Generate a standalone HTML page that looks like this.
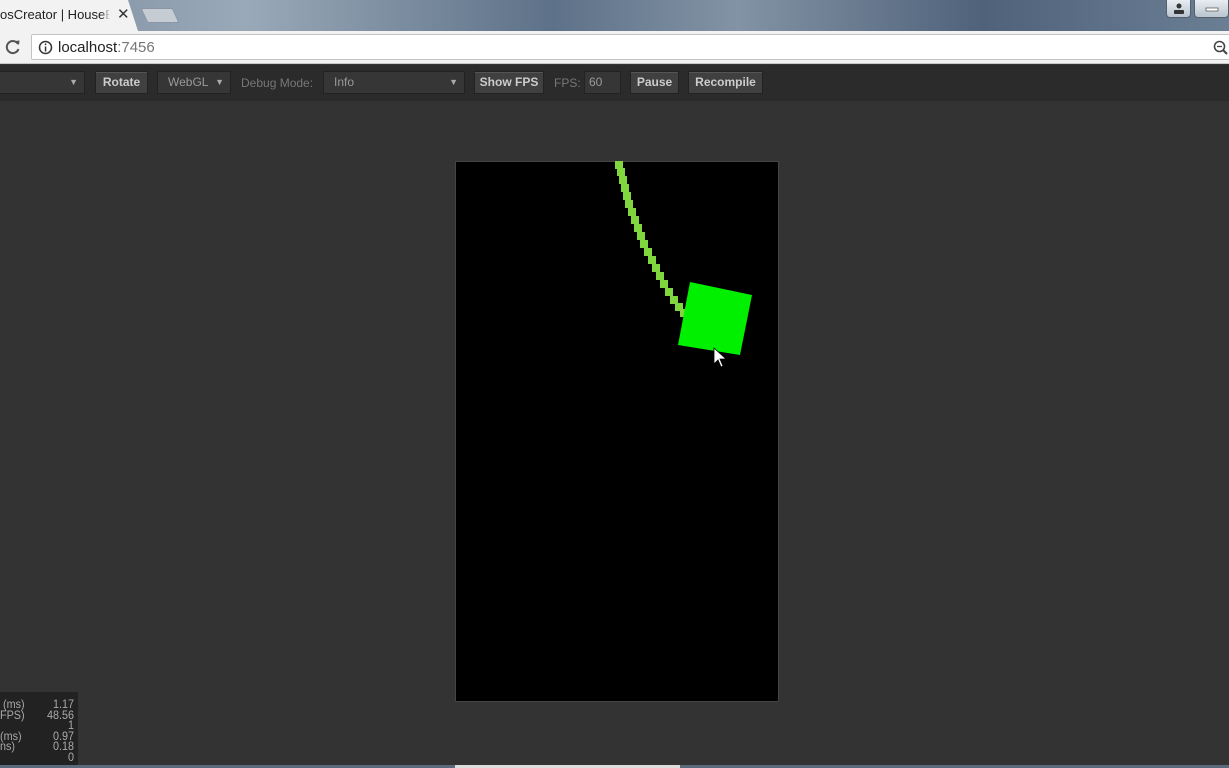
<!DOCTYPE html>
<html><head><meta charset="utf-8"><style>
*{margin:0;padding:0;box-sizing:border-box}
body{width:1229px;height:768px;overflow:hidden;background:#333;font-family:"Liberation Sans",sans-serif;position:relative}
.tabbar{position:absolute;left:0;top:0;width:1229px;height:31px;background:linear-gradient(90deg,#7c8da0,#9aa9b8 20%,#5d7188 45%,#8393a5 60%,#4f627a 80%,#6a7e94);}
.tab{position:absolute;left:0;top:0;width:138px;height:31px;background:#f2f2f2;clip-path:polygon(0 0,128px 0,138px 31px,0 31px)}
.tab span{position:absolute;left:0;top:7px;width:110px;overflow:hidden;font-size:13px;color:#222;white-space:nowrap;-webkit-mask-image:linear-gradient(90deg,#000 92%,transparent)}
.tab b{position:absolute;left:117px;top:5px;font-size:15px;font-weight:normal;color:#333}
.newtab{position:absolute;left:144px;top:8px;width:32px;height:15px;background:#c6ccd3;transform:skewX(25deg);border:1px solid #8a96a3;border-radius:2px}
.wb{position:absolute;top:0;height:18px;background:linear-gradient(#e8edf2,#b9c4cf);border:1px solid #55606c;border-top:none;border-radius:0 0 4px 4px}
.addr{position:absolute;left:0;top:31px;width:1229px;height:33px;background:#f2f2f2;border-bottom:1px solid #c8c8c8}
.input{position:absolute;left:31px;top:3px;width:1210px;height:26px;background:#fff;border:1px solid #c3c3c3;border-radius:2px}
.input span{position:absolute;left:26px;top:4px;font-size:15px;color:#222}
.toolbar{position:absolute;left:0;top:65px;width:1229px;height:36px;background:#2b2b2b}
.btn{position:absolute;top:6px;height:23px;background:#404040;border:1px solid #222;box-shadow:inset 0 1px 0 #555;color:#ccc;font-size:12px;font-weight:bold;line-height:21px;text-align:center}
.sel{position:absolute;top:6px;height:23px;background:#363636;border:1px solid #222;color:#999;font-size:12px;line-height:21px;padding-left:10px}
.sel i{position:absolute;right:6px;top:0;font-style:normal;font-size:9px;color:#aaa}
.lbl{position:absolute;top:11px;font-size:12px;color:#777}
.canvas{position:absolute;left:455px;top:161px;width:324px;height:541px;background:#000;border:1px solid #444}
.stats{position:absolute;left:0;top:692px;width:78px;height:74px;background:#222;font-family:"Liberation Sans Narrow","Liberation Sans",sans-serif;font-size:12px;line-height:10.6px;color:#aaa}
.stats .l{position:absolute;left:0;top:7px;transform:scaleX(0.9);transform-origin:left}
.stats .r{position:absolute;right:4px;top:7px;text-align:right;transform:scaleX(0.9);transform-origin:right}
.bottomline{position:absolute;left:0;top:765px;width:1229px;height:3px;background:#5a6a7a}
</style></head><body>
<div class="tabbar">
<div class="tab"><span>osCreator | HouseBuilder</span><b>✕</b></div>
<div class="newtab"></div>
<div class="wb" style="left:1166px;width:25px"><svg width="25" height="18"><circle cx="12" cy="6" r="2.5" fill="#333"/><rect x="7" y="10" width="10" height="4" rx="1" fill="#333"/></svg></div>
<div class="wb" style="left:1194px;width:35px"><svg width="35" height="18"><rect x="11" y="8" width="12" height="3" fill="#fff" stroke="#333" stroke-width="0.6"/></svg></div>
</div>
<div class="addr">
<svg style="position:absolute;left:5px;top:8px" width="16" height="16"><path d="M13 5A6 6 0 1 0 13.5 10" fill="none" stroke="#555" stroke-width="2"/><path d="M10 2L14.5 1.5 14 6Z" fill="#555"/></svg>
<div class="input"><svg style="position:absolute;left:6px;top:5px" width="15" height="15"><circle cx="7.5" cy="7.5" r="6" fill="none" stroke="#333" stroke-width="1.5"/><rect x="6.8" y="6.5" width="1.5" height="5" fill="#333"/><rect x="6.8" y="3.5" width="1.5" height="1.6" fill="#333"/></svg><span>localhost<span style="position:static;color:#777">:7456</span></span>
<svg style="position:absolute;left:1181px;top:5px" width="16" height="16"><circle cx="6.5" cy="6.5" r="5" fill="none" stroke="#444" stroke-width="1.6"/><line x1="10" y1="10" x2="14" y2="14" stroke="#444" stroke-width="2"/><line x1="4" y1="6.5" x2="9" y2="6.5" stroke="#444" stroke-width="1.3"/></svg></div>
</div>
<div class="toolbar">
<div class="sel" style="left:-2px;width:87px"><i>▼</i></div>
<div class="btn" style="left:95px;width:53px">Rotate</div>
<div class="sel" style="left:157px;width:74px">WebGL<i>▼</i></div>
<div class="lbl" style="left:241px">Debug Mode:</div>
<div class="sel" style="left:323px;width:142px">Info<i>▼</i></div>
<div class="btn" style="left:474px;width:70px">Show FPS</div>
<div class="lbl" style="left:554px">FPS:</div>
<div class="sel" style="left:584px;width:37px;padding-left:4px">60</div>
<div class="btn" style="left:630px;width:49px">Pause</div>
<div class="btn" style="left:688px;width:75px">Recompile</div>
</div>
<div class="canvas"></div>
<svg style="position:absolute;left:0;top:0" width="1229" height="768">
<g fill="#7fd63f">
<rect x="615" y="161" width="8" height="8"/><rect x="617" y="168" width="8" height="8"/><rect x="619" y="176" width="8" height="8"/><rect x="621" y="184" width="8" height="8"/><rect x="623" y="192" width="8" height="8"/><rect x="625" y="200" width="8" height="8"/><rect x="628" y="208" width="8" height="8"/><rect x="631" y="216" width="8" height="8"/><rect x="634" y="224" width="8" height="8"/><rect x="637" y="232" width="8" height="8"/><rect x="640" y="240" width="8" height="8"/><rect x="644" y="248" width="8" height="8"/><rect x="648" y="256" width="8" height="8"/><rect x="652" y="264" width="8" height="8"/><rect x="656" y="272" width="8" height="8"/><rect x="660" y="280" width="8" height="8"/><rect x="665" y="288" width="8" height="8"/><rect x="670" y="296" width="8" height="8"/><rect x="675" y="303" width="8" height="8"/><rect x="680" y="309" width="8" height="8"/>
</g>
<polygon points="690,282 752,295 740,355 678,345" fill="#00f000"/>
<path d="M714 348L714 364 718 360 721 367 723 366 720 359 726 359Z" fill="#fff" stroke="#000" stroke-width="0.8"/>
</svg>
<div class="stats"><div class="l">&nbsp;(ms)<br>FPS)<br><br>(ms)<br>ns)<br></div><div class="r">1.17<br>48.56<br>1<br>0.97<br>0.18<br>0</div></div>
<div class="bottomline"></div>
<div style="position:absolute;left:455px;top:765px;width:225px;height:3px;background:#ddd"></div>
</body></html>
